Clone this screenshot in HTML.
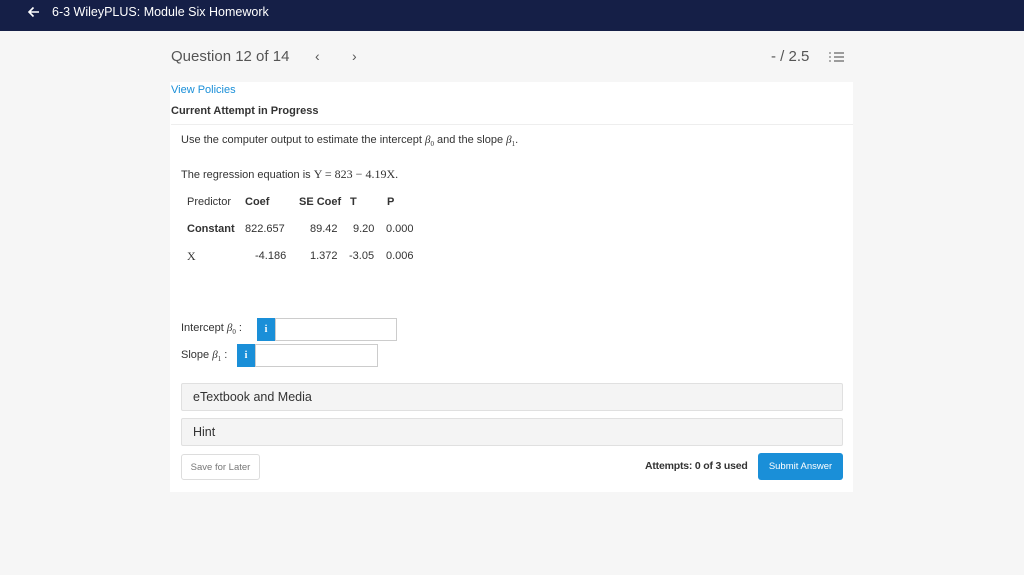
<!DOCTYPE html>
<html><head><style>
*{margin:0;padding:0;box-sizing:border-box}
body{width:1024px;height:575px;background:#f6f6f6;font-family:"Liberation Sans",sans-serif;position:relative;overflow:hidden;color:#333}
.a{position:absolute;white-space:nowrap}
.hdr{position:absolute;left:0;top:0;width:1024px;height:31px;background:#151f47}
.panel{position:absolute;left:170px;top:82px;width:683px;height:410px;background:#fff}
.s{font-size:11px;color:#333}
.m{font-family:"Liberation Serif",serif}
.inp{position:absolute;border:1px solid #ccc;background:#fff;height:23px}
.ib{position:absolute;width:18px;height:23px;background:#1a8fd8;color:#fff;font-size:10px;font-weight:bold;text-align:center;line-height:23px;font-family:"Liberation Serif",serif}
.bar{position:absolute;left:181px;width:662px;height:28px;background:#f4f4f4;border:1px solid #e0e0e0;border-radius:2px;font-size:12.5px;padding-left:11px;line-height:27px;color:#333}
</style></head><body>
<div class="hdr"></div>
<svg class="a" style="left:27px;top:5px" width="14" height="14" viewBox="0 0 14 14"><path d="M12 7H2M6.5 2.5L2 7l4.5 4.5" stroke="#fff" stroke-width="1.6" fill="none"/></svg>
<div class="a" style="left:52px;top:5px;color:#fff;font-size:12.5px">6-3 WileyPLUS: Module Six Homework</div>
<div class="a" style="left:171px;top:48px;font-size:15px;color:#555">Question 12 of 14</div>
<div class="a" style="left:315px;top:48px;font-size:14px;color:#555">&#8249;</div>
<div class="a" style="left:352px;top:48px;font-size:14px;color:#555">&#8250;</div>
<div class="a" style="left:771px;top:48px;font-size:15px;color:#555">- / 2.5</div>
<svg class="a" style="left:829px;top:51px" width="15" height="12"><g stroke="#666" stroke-width="1.3"><path d="M5 2h10M5 6h10M5 10h10"/><path d="M0 2h2M0 6h2M0 10h2" stroke-width="1"/></g></svg>
<div class="panel"></div>
<div class="a" style="left:171px;top:84px;font-size:11px;color:#1a8fd8">View Policies</div>
<div class="a" style="left:171px;top:105px;font-size:11px;font-weight:bold;color:#333">Current Attempt in Progress</div>
<div class="a" style="left:171px;top:124px;width:682px;height:1px;background:#eee"></div>
<div class="a s" style="left:181px;top:134px">Use the computer output to estimate the intercept <span class="m"><i>β</i><sub style="font-size:7px">0</sub></span> and the slope <span class="m"><i>β</i><sub style="font-size:7px">1</sub></span>.</div>
<div class="a s" style="left:181px;top:167px">The regression equation is <span class="m" style="font-size:12px">Y = 823 − 4.19X.</span></div>
<div class="a s" style="left:187px;top:196px">Predictor</div>
<div class="a s" style="left:245px;top:196px;font-weight:bold">Coef</div>
<div class="a s" style="left:299px;top:196px;font-weight:bold">SE Coef</div>
<div class="a s" style="left:350px;top:196px;font-weight:bold">T</div>
<div class="a s" style="left:387px;top:196px;font-weight:bold">P</div>
<div class="a s" style="left:187px;top:223px;font-weight:bold">Constant</div>
<div class="a s" style="left:245px;top:223px">822.657</div>
<div class="a s" style="left:310px;top:223px">89.42</div>
<div class="a s" style="left:353px;top:223px">9.20</div>
<div class="a s" style="left:386px;top:223px">0.000</div>
<div class="a s m" style="left:187px;top:249px;font-size:12px">X</div>
<div class="a s" style="left:255px;top:250px">-4.186</div>
<div class="a s" style="left:310px;top:250px">1.372</div>
<div class="a s" style="left:349px;top:250px">-3.05</div>
<div class="a s" style="left:386px;top:250px">0.006</div>
<div class="a s" style="left:181px;top:322px">Intercept <span class="m"><i>β</i><sub style="font-size:7px">0</sub></span> :</div>
<div class="ib" style="left:257px;top:318px">i</div>
<div class="inp" style="left:275px;top:318px;width:122px"></div>
<div class="a s" style="left:181px;top:349px">Slope <span class="m"><i>β</i><sub style="font-size:7px">1</sub></span> :</div>
<div class="ib" style="left:237px;top:344px">i</div>
<div class="inp" style="left:255px;top:344px;width:123px"></div>
<div class="bar" style="top:383px">eTextbook and Media</div>
<div class="bar" style="top:418px">Hint</div>
<div class="a" style="left:181px;top:454px;width:79px;height:26px;border:1px solid #ddd;border-radius:3px;font-size:9.5px;color:#777;text-align:center;line-height:25px">Save for Later</div>
<div class="a" style="left:645px;top:460px;font-size:10.5px;font-weight:bold;color:#333;letter-spacing:-0.2px">Attempts: 0 of 3 used</div>
<div class="a" style="left:758px;top:453px;width:85px;height:27px;background:#1a8fd8;border-radius:3px;font-size:9.5px;color:#fff;text-align:center;line-height:27px">Submit Answer</div>
</body></html>
